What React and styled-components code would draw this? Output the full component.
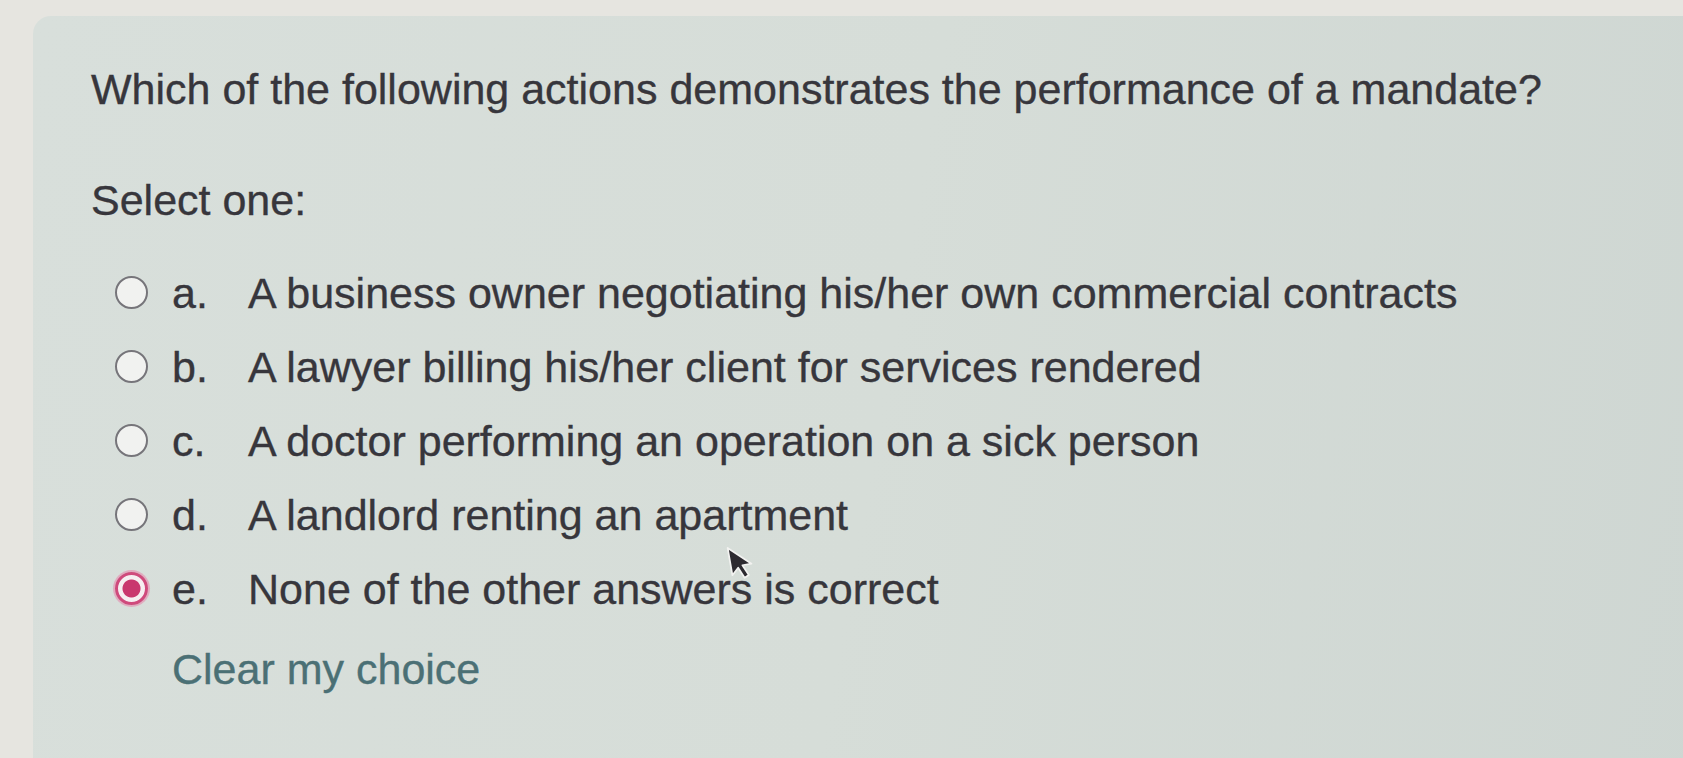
import React from "react";
import styled, { createGlobalStyle } from "styled-components";

const Global = createGlobalStyle`
  html, body { margin: 0; padding: 0; }
  body {
    background: #e6e5e0;
    font-family: "Liberation Sans", Arial, Helvetica, sans-serif;
    overflow: hidden;
  }
`;

const Page = styled.div`
  position: relative;
  height: 758px;
  padding: 16px 0 0 33px;
  box-sizing: border-box;
  overflow: hidden;
`;

const Panel = styled.section`
  width: calc(100% + 40px);
  height: 800px;
  box-sizing: border-box;
  background: linear-gradient(100deg, #d8dfdb 0%, #d6ddd8 50%, #ced6d2 100%);
  border-radius: 18px;
  padding: 47px 0 0 58px;
  display: flex;
  flex-direction: column;
  color: #37363c;
  font-size: 43px;
  line-height: 52px;
  -webkit-text-stroke: 0.35px currentColor;
`;

const Question = styled.div`
  margin: 0;
`;

const Prompt = styled.div`
  margin-top: 59px;
`;

const Answers = styled.div`
  margin-top: 41px;
  display: flex;
  flex-direction: column;
  gap: 22px;
`;

const Row = styled.label`
  display: flex;
  align-items: center;
  padding-left: 24px;
  cursor: pointer;
`;

const Radio = styled.span`
  flex: none;
  width: 33px;
  height: 33px;
  box-sizing: border-box;
  border-radius: 50%;
  margin-right: 24px;
  margin-top: -2px;
  border: ${(p) => (p.$checked ? "3px solid #cf4a7c" : "2.5px solid #76757a")};
  background: ${(p) =>
    p.$checked
      ? "radial-gradient(circle, #c9376e 0 8.5px, #f6eef1 9.5px 100%)"
      : "#f1f2f0"};
  box-shadow: ${(p) => (p.$checked ? "0 0 0 2px rgba(228,150,180,0.7)" : "none")};
`;

const Letter = styled.span`
  flex: none;
  width: 76px;
`;

const Text = styled.span`
  white-space: nowrap;
`;

const Clear = styled.a`
  margin-top: 28px;
  margin-left: 81px;
  color: #4b7075;
  text-decoration: none;
`;

const Cursor = styled.svg`
  position: absolute;
  left: 727px;
  top: 543px;
  width: 30px;
  height: 40px;
  transform: rotate(-10deg);
`;

const options = [
  { l: "a.", t: "A business owner negotiating his/her own commercial contracts" },
  { l: "b.", t: "A lawyer billing his/her client for services rendered" },
  { l: "c.", t: "A doctor performing an operation on a sick person" },
  { l: "d.", t: "A landlord renting an apartment" },
  { l: "e.", t: "None of the other answers is correct", checked: true },
];

export default function App() {
  return (
    <>
      <Global />
      <Page>
        <Panel>
          <Question>
            Which of the following actions demonstrates the performance of a mandate?
          </Question>
          <Prompt>Select one:</Prompt>
          <Answers>
            {options.map((o) => (
              <Row key={o.l}>
                <Radio $checked={o.checked} />
                <Letter>{o.l}</Letter>
                <Text>{o.t}</Text>
              </Row>
            ))}
          </Answers>
          <Clear href="#">Clear my choice</Clear>
        </Panel>
        <Cursor viewBox="0 0 26 34">
          <path
            d="M3 2 L3 26 L9 20.5 L13 30 L17 28.3 L13 19 L21 19 Z"
            fill="#2d2a30"
            stroke="#f2f2f0"
            strokeWidth="1.5"
            strokeLinejoin="round"
          />
        </Cursor>
      </Page>
    </>
  );
}
